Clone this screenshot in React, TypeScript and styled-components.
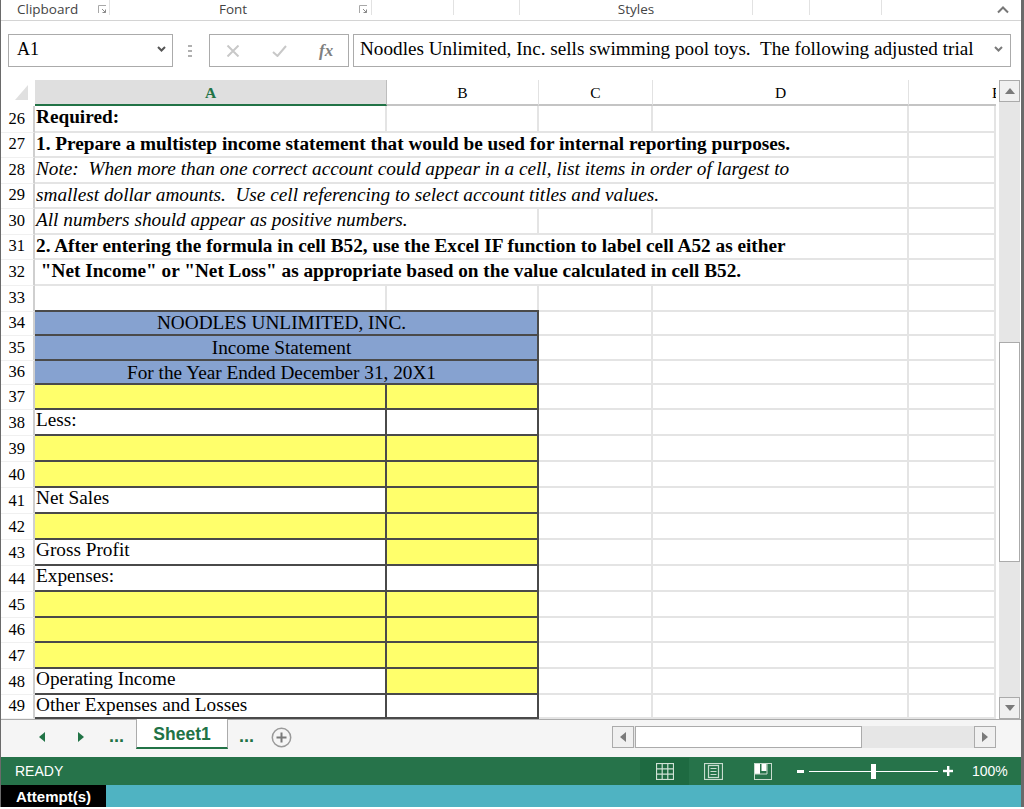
import React from 'react'
import styled, { createGlobalStyle } from 'styled-components'

const GlobalStyle = createGlobalStyle`
  html, body {
    margin: 0;
    padding: 0;
    background: #fff;
  }
`

const Window = styled.div`
  width: 1024px;
  height: 807px;
  display: flex;
  flex-direction: column;
  overflow: hidden;
  box-sizing: border-box;
  border-left: 1px solid #6a6a6a;
  border-right: 3px solid #6a6a6a;
  background: #fff;
`

const RibbonFoot = styled.div`
  height: 21px;
  flex: none;
  box-sizing: border-box;
  border-bottom: 1px solid #d4d4d4;
  display: flex;
  align-items: flex-start;
  font-family: 'Open Sans', sans-serif;
  font-size: 13.5px;
  color: #444;
`

const RibbonGroup = styled.div<{ $w: number; $sep?: boolean; $center?: boolean; $pad?: number }>`
  width: ${(p) => p.$w}px;
  height: 15px;
  flex: none;
  box-sizing: border-box;
  padding-left: ${(p) => p.$pad ?? 0}px;
  line-height: 19px;
  border-right: ${(p) => (p.$sep ? '1px solid #e2e2e2' : 'none')};
  display: flex;
  align-items: flex-start;
  justify-content: ${(p) => (p.$center ? 'center' : 'flex-start')};
`

const Launcher = styled.svg<{ $ml: number }>`
  margin: 5px 0 0 ${(p) => p.$ml}px;
  flex: none;
`

const RibbonCollapse = styled.svg`
  margin: 6px 0 0 0;
  flex: none;
`

const FormulaRow = styled.div`
  height: 59px;
  flex: none;
  display: flex;
  align-items: flex-start;
  padding: 13px 0 0 7px;
  box-sizing: border-box;
  font-family: 'Liberation Serif', serif;
  color: #000;
`

const NameBox = styled.div`
  width: 165px;
  height: 33px;
  box-sizing: border-box;
  border: 1px solid #ababab;
  display: flex;
  align-items: center;
  justify-content: space-between;
  padding: 0 6px 3px 8px;
  font-size: 18px;
`

const Dots = styled.svg`
  margin: 11px 17px 0 15px;
  flex: none;
`

const FxBox = styled.div`
  width: 140px;
  height: 33px;
  box-sizing: border-box;
  border: 1px solid #ababab;
  display: flex;
  align-items: center;
  padding-left: 16px;
  gap: 32px;
  flex: none;
`

const FxLabel = styled.span`
  font-family: 'Liberation Serif', serif;
  font-style: italic;
  font-weight: bold;
  font-size: 17px;
  color: #808080;
`

const FormulaInput = styled.div`
  width: 658px;
  height: 33px;
  margin-left: 4px;
  box-sizing: border-box;
  border: 1px solid #ababab;
  display: flex;
  align-items: center;
  justify-content: space-between;
  padding: 0 7px 3px 6px;
  font-size: 19.2px;
  white-space: pre;
  flex: none;
`

const SheetArea = styled.div`
  display: flex;
  flex: none;
  height: 639px;
  border-bottom: 1px solid #ababab;
  box-sizing: content-box;
`

const Sheet = styled.div`
  width: 995px;
  flex: none;
  display: grid;
  grid-template-columns: 34px 352px 152px 114px 256px 87px;
  grid-template-rows: 26px 27px 25px 26px 25px 26px 25px 26px 26px 24px 25px 24px 25px 26px 26px 26px 26px 26px 26px 26px 26px 25px 26px 26px 24px;
  font-family: 'Liberation Serif', serif;
  color: #000;
`

const Corner = styled.div`
  display: flex;
  align-items: flex-end;
  justify-content: flex-end;
  padding: 0 7px 6px 0;
`

const ColHead = styled.div<{ $active?: boolean }>`
  display: flex;
  align-items: center;
  justify-content: center;
  box-sizing: border-box;
  font-size: 15.5px;
  font-weight: ${(p) => (p.$active ? 'bold' : 'normal')};
  color: ${(p) => (p.$active ? '#217346' : '#000')};
  background: ${(p) => (p.$active ? '#dfdfdf' : '#fff')};
  border-right: 1px solid ${(p) => (p.$active ? '#bdbdbd' : '#e2e2e2')};
  border-bottom: ${(p) => (p.$active ? '2px solid #217346' : '2px solid #c4c4c4')};
  padding-top: 2px;
`

const LastHead = styled(ColHead)`
  justify-content: flex-start;
  border-right: none;
  padding-left: 83px;
  overflow: hidden;
`

const RowNum = styled.div<{ $pb: number }>`
  font-size: 16.5px;
  display: flex;
  align-items: flex-end;
  justify-content: flex-end;
  padding: 0 8px ${(p) => p.$pb}px 0;
  border-right: 2px solid #cfcfcf;
  border-bottom: 1px solid #f0f0f0;
  box-sizing: border-box;
`

const Cell = styled.div<{
  $fill?: string
  $frame?: boolean
  $center?: boolean
  $bold?: boolean
  $italic?: boolean
  $open?: boolean
  $span?: number
  $lh?: number
}>`
  box-sizing: border-box;
  grid-column: span ${(p) => p.$span ?? 1};
  background: ${(p) => p.$fill ?? 'transparent'};
  border-right: ${(p) => (p.$frame ? '2px solid #4a4a4a' : p.$open ? 'none' : '2px solid #e4e4e4')};
  border-bottom: ${(p) => (p.$frame ? '2px solid #4a4a4a' : '2px solid #e4e4e4')};
  font-size: 19.25px;
  font-weight: ${(p) => (p.$bold ? 'bold' : 'normal')};
  font-style: ${(p) => (p.$italic ? 'italic' : 'normal')};
  text-align: ${(p) => (p.$center ? 'center' : 'left')};
  padding: 0 ${(p) => (p.$center ? 10 : 0)}px 0 1px;
  line-height: ${(p) => p.$lh ?? 19}px;
  white-space: pre;
  min-width: 0;
`

const TopFrameCell = styled(Cell)`
  border-top: 2px solid #4a4a4a;
  margin-top: -2px;
  height: calc(100% + 2px);
`

const VScroll = styled.div`
  width: 21px;
  height: 100%;
  flex: none;
  margin-left: 3px;
  background: #e6e6e6;
  display: flex;
  flex-direction: column;
  justify-content: space-between;
  position: relative;
`

const ScrollBtn = styled.div<{ $w?: number; $h?: number }>`
  width: ${(p) => p.$w ?? 21}px;
  height: ${(p) => p.$h ?? 22}px;
  box-sizing: border-box;
  border: 1px solid #ababab;
  background: #f0f0f0;
  display: flex;
  align-items: center;
  justify-content: center;
  flex: none;
`

const VThumb = styled.div`
  position: absolute;
  left: 0;
  top: 262px;
  width: 21px;
  height: 220px;
  box-sizing: border-box;
  border: 1px solid #ababab;
  background: #fff;
`

const TabBar = styled.div`
  height: 37px;
  flex: none;
  background: #f5f5f5;
  display: flex;
  align-items: flex-start;
  font-family: 'Liberation Sans', sans-serif;
`

const NavArrows = styled.div`
  display: flex;
  align-items: center;
  gap: 29px;
  margin: 12px 0 0 36px;
`

const More = styled.span<{ $ml: number }>`
  font-weight: bold;
  font-size: 18px;
  color: #217346;
  line-height: 20px;
  margin: 6px 0 0 ${(p) => p.$ml}px;
`

const SheetTab = styled.div`
  width: 92px;
  height: 30px;
  margin: -1px 0 0 12px;
  box-sizing: border-box;
  background: #fff;
  border-left: 1px solid #ababab;
  border-right: 1px solid #ababab;
  border-bottom: 2px solid #217346;
  font-weight: bold;
  font-size: 17.5px;
  color: #217346;
  text-align: center;
  line-height: 30px;
`

const AddSheet = styled.svg`
  margin: 7px 0 0 17px;
  flex: none;
`

const HScroll = styled.div`
  margin: 6px 25px 0 auto;
  width: 384px;
  height: 22px;
  background: #e6e6e6;
  display: flex;
  justify-content: space-between;
  position: relative;
`

const HThumb = styled.div`
  position: absolute;
  left: 23px;
  top: 0;
  width: 227px;
  height: 22px;
  box-sizing: border-box;
  border: 1px solid #ababab;
  background: #fff;
`

const StatusBar = styled.div`
  height: 28px;
  flex: none;
  background: #26734a;
  display: flex;
  align-items: center;
  font-family: 'Liberation Sans', sans-serif;
  font-size: 14px;
  color: #fff;
`

const StatusText = styled.span`
  margin-left: 14px;
  flex: 1;
`

const ViewSwitch = styled.div<{ $on?: boolean }>`
  width: 49px;
  height: 27px;
  display: flex;
  align-items: center;
  justify-content: center;
  background: ${(p) => (p.$on ? '#1e6a41' : 'transparent')};
`

const Zoom = styled.div`
  display: flex;
  align-items: center;
  width: 234px;
  box-sizing: border-box;
  padding-left: 10px;
  flex: none;
`

const ZoomMinus = styled.span`
  width: 12px;
  height: 3px;
  flex: none;
  position: relative;

  &::before {
    content: '';
    position: absolute;
    left: 0;
    top: 0;
    width: 7px;
    height: 3px;
    background: #fff;
  }
`

const ZoomPlus = styled.svg`
  margin-left: 5px;
  flex: none;
`

const ZoomTrack = styled.div`
  width: 129px;
  height: 1px;
  background: #fff;
  position: relative;
  flex: none;
`

const ZoomKnob = styled.div`
  position: absolute;
  left: 62px;
  top: -7px;
  width: 5px;
  height: 15px;
  background: #fff;
`

const ZoomValue = styled.span`
  margin-left: 19px;
`

const AttemptBar = styled.div`
  height: 22px;
  flex: 1;
  background: #4fb3c2;
  display: flex;
`

const AttemptLabel = styled.div`
  width: 105px;
  background: #000;
  color: #fff;
  font-family: 'Liberation Sans', sans-serif;
  font-weight: bold;
  font-size: 15px;
  line-height: 24px;
  padding-left: 15px;
  box-sizing: border-box;
`

const LauncherIcon = ({ ml }: { ml: number }) => (
  <Launcher $ml={ml} width="9" height="9" viewBox="0 0 9 9" fill="none">
    <path d="M0.5 8V0.5H8" stroke="#a8a8a8" />
    <path d="M4 4L7.5 7.5M7.5 4.5V7.5H4.5" stroke="#8a8a8a" />
  </Launcher>
)

const Chevron = ({ color = '#555' }: { color?: string }) => (
  <svg width="9" height="6" viewBox="0 0 9 6" fill="none">
    <path d="M1 1L4.5 4.5L8 1" stroke={color} strokeWidth="2" />
  </svg>
)

const Tri = ({ dir, color = '#7a7a7a', size = 5 }: { dir: 'up' | 'down' | 'left' | 'right'; color?: string; size?: number }) => {
  const shapes = {
    up: '0,8 5,2 10,8',
    down: '0,2 10,2 5,8',
    left: '8,0 8,10 2,5',
    right: '2,0 2,10 8,5',
  }
  return (
    <svg width={size * 2} height={size * 2} viewBox="0 0 10 10">
      <polygon points={shapes[dir]} fill={color} />
    </svg>
  )
}

type RowDef = { n: number; a?: string; b?: boolean; i?: boolean; fill?: boolean; bFill?: boolean; spill?: number; kind: 'note' | 'title' | 'form' }

const BLUE = '#86a2d0'
const YELLOW = '#ffff6b'

const rows: RowDef[] = [
  { n: 26, a: 'Required:', b: true, kind: 'note' },
  { n: 27, a: '1. Prepare a multistep income statement that would be used for internal reporting purposes.', b: true, spill: 3, kind: 'note' },
  { n: 28, a: 'Note:  When more than one correct account could appear in a cell, list items in order of largest to', i: true, spill: 3, kind: 'note' },
  { n: 29, a: 'smallest dollar amounts.  Use cell referencing to select account titles and values.', i: true, spill: 3, kind: 'note' },
  { n: 30, a: 'All numbers should appear as positive numbers.', i: true, spill: 1, kind: 'note' },
  { n: 31, a: '2. After entering the formula in cell B52, use the Excel IF function to label cell A52 as either', b: true, spill: 3, kind: 'note' },
  { n: 32, a: ' "Net Income" or "Net Loss" as appropriate based on the value calculated in cell B52.', b: true, spill: 3, kind: 'note' },
  { n: 33, kind: 'note' },
  { n: 34, a: 'NOODLES UNLIMITED, INC.', kind: 'title' },
  { n: 35, a: 'Income Statement', kind: 'title' },
  { n: 36, a: 'For the Year Ended December 31, 20X1', kind: 'title' },
  { n: 37, fill: true, bFill: true, kind: 'form' },
  { n: 38, a: 'Less:', kind: 'form' },
  { n: 39, fill: true, bFill: true, kind: 'form' },
  { n: 40, fill: true, bFill: true, kind: 'form' },
  { n: 41, a: 'Net Sales', bFill: true, kind: 'form' },
  { n: 42, fill: true, bFill: true, kind: 'form' },
  { n: 43, a: 'Gross Profit', bFill: true, kind: 'form' },
  { n: 44, a: 'Expenses:', kind: 'form' },
  { n: 45, fill: true, bFill: true, kind: 'form' },
  { n: 46, fill: true, bFill: true, kind: 'form' },
  { n: 47, fill: true, bFill: true, kind: 'form' },
  { n: 48, a: 'Operating Income', bFill: true, kind: 'form' },
  { n: 49, a: 'Other Expenses and Losses', kind: 'form' },
]

const renderRow = (r: RowDef) => {
  if (r.kind === 'note') {
    const spill = r.spill ?? 0
    return (
      <React.Fragment key={r.n}>
        <RowNum $pb={3}>{r.n}</RowNum>
        <Cell $bold={r.b} $italic={r.i} $open={spill > 0} $lh={22}>{r.a}</Cell>
        <Cell $open={spill > 1} />
        <Cell $open={spill > 2} />
        <Cell />
        <Cell />
      </React.Fragment>
    )
  }
  if (r.kind === 'title') {
    const Frame = r.n === 34 ? TopFrameCell : Cell
    return (
      <React.Fragment key={r.n}>
        <RowNum $pb={2}>{r.n}</RowNum>
        <Frame $span={2} $fill={BLUE} $frame $center $lh={r.n === 34 ? 22 : 23}>{r.a}</Frame>
        <Cell />
        <Cell />
        <Cell />
      </React.Fragment>
    )
  }
  return (
    <React.Fragment key={r.n}>
      <RowNum $pb={2}>{r.n}</RowNum>
      <Cell $frame $fill={r.fill ? YELLOW : '#fff'}>{r.a}</Cell>
      <Cell $frame $fill={r.bFill ? YELLOW : '#fff'} />
      <Cell />
      <Cell />
      <Cell />
    </React.Fragment>
  )
}

export default function App() {
  return (
    <Window>
      <GlobalStyle />
      <RibbonFoot>
        <RibbonGroup $w={109} $sep $pad={16}>Clipboard<LauncherIcon ml={20} /></RibbonGroup>
        <RibbonGroup $w={262} $sep $pad={109}>Font<LauncherIcon ml={112} /></RibbonGroup>
        <RibbonGroup $w={82} $sep />
        <RibbonGroup $w={66} $sep />
        <RibbonGroup $w={233} $sep $center>Styles</RibbonGroup>
        <RibbonGroup $w={57} $sep />
        <RibbonGroup $w={72} $sep />
        <RibbonGroup $w={115} />
        <RibbonCollapse width="12" height="8" viewBox="0 0 12 8" fill="none">
          <path d="M1 6.5L6 1.5L11 6.5" stroke="#777" strokeWidth="2" />
        </RibbonCollapse>
      </RibbonFoot>
      <FormulaRow>
        <NameBox>
          A1
          <Chevron />
        </NameBox>
        <Dots width="4" height="12" viewBox="0 0 4 12" fill="#b0b0b0">
          <rect x="0" y="0" width="4" height="2" />
          <rect x="0" y="5" width="4" height="2" />
          <rect x="0" y="10" width="4" height="2" />
        </Dots>
        <FxBox>
          <svg width="14" height="12" viewBox="0 0 14 12" fill="none">
            <path d="M1.5 0.5L12.5 11.5M12.5 0.5L1.5 11.5" stroke="#c8c8c8" strokeWidth="2" />
          </svg>
          <svg width="15" height="12" viewBox="0 0 15 12" fill="none">
            <path d="M1 7L5.5 11L14 1" stroke="#c8c8c8" strokeWidth="2" />
          </svg>
          <FxLabel>fx</FxLabel>
        </FxBox>
        <FormulaInput>
          Noodles Unlimited, Inc. sells swimming pool toys.  The following adjusted trial
          <Chevron color="#7a7a7a" />
        </FormulaInput>
      </FormulaRow>
      <SheetArea>
        <Sheet>
          <Corner>
            <svg width="13" height="15" viewBox="0 0 13 15">
              <polygon points="13,0 13,15 0,15" fill="#e0e0e0" />
            </svg>
          </Corner>
          <ColHead $active>A</ColHead>
          <ColHead>B</ColHead>
          <ColHead>C</ColHead>
          <ColHead>D</ColHead>
          <LastHead>E</LastHead>
          {rows.map(renderRow)}
        </Sheet>
        <VScroll>
          <ScrollBtn><Tri dir="up" /></ScrollBtn>
          <VThumb />
          <ScrollBtn><Tri dir="down" /></ScrollBtn>
        </VScroll>
      </SheetArea>
      <TabBar>
        <NavArrows>
          <Tri dir="left" color="#217346" />
          <Tri dir="right" color="#217346" />
        </NavArrows>
        <More $ml={23}>...</More>
        <SheetTab>Sheet1</SheetTab>
        <More $ml={11}>...</More>
        <AddSheet width="21" height="21" viewBox="0 0 21 21" fill="none">
          <circle cx="10.5" cy="10.5" r="9.2" stroke="#9a9a9a" strokeWidth="1.5" fill="#f5f5f5" />
          <path d="M10.5 5.5V15.5M5.5 10.5H15.5" stroke="#7a7a7a" strokeWidth="2" />
        </AddSheet>
        <HScroll>
          <ScrollBtn $w={22}><Tri dir="left" /></ScrollBtn>
          <HThumb />
          <ScrollBtn $w={22}><Tri dir="right" /></ScrollBtn>
        </HScroll>
      </TabBar>
      <StatusBar>
        <StatusText>READY</StatusText>
        <ViewSwitch $on>
          <svg width="18" height="17" viewBox="0 0 18 17" fill="none" stroke="#d0e2d6" strokeWidth="1.2">
            <rect x="0.5" y="0.5" width="17" height="16" />
            <path d="M6.2 0.5V16.5M11.8 0.5V16.5M0.5 5.8H17.5M0.5 11.2H17.5" />
          </svg>
        </ViewSwitch>
        <ViewSwitch>
          <svg width="19" height="17" viewBox="0 0 19 17" fill="none" stroke="#c8dccf" strokeWidth="1.2">
            <rect x="0.5" y="0.5" width="18" height="16" />
            <rect x="4.5" y="2.5" width="10" height="12" />
            <path d="M6.5 5.5H12.5M6.5 8.5H12.5M6.5 11.5H12.5" />
          </svg>
        </ViewSwitch>
        <ViewSwitch>
          <svg width="18" height="17" viewBox="0 0 18 17" fill="none">
            <rect x="0.5" y="0.5" width="17" height="16" stroke="#c8dccf" />
            <rect x="1" y="1" width="5" height="10" fill="#fff" />
            <rect x="7.5" y="1" width="5" height="7" fill="#fff" />
            <path d="M1 11H13V1" stroke="#c8dccf" />
          </svg>
        </ViewSwitch>
        <Zoom>
          <ZoomMinus />
          <ZoomTrack><ZoomKnob /></ZoomTrack>
          <ZoomPlus width="10" height="10" viewBox="0 0 10 10" fill="#fff">
            <rect x="4" y="0" width="2.4" height="10" />
            <rect x="0" y="3.8" width="10" height="2.4" />
          </ZoomPlus>
          <ZoomValue>100%</ZoomValue>
        </Zoom>
      </StatusBar>
      <AttemptBar>
        <AttemptLabel>Attempt(s)</AttemptLabel>
      </AttemptBar>
    </Window>
  )
}
